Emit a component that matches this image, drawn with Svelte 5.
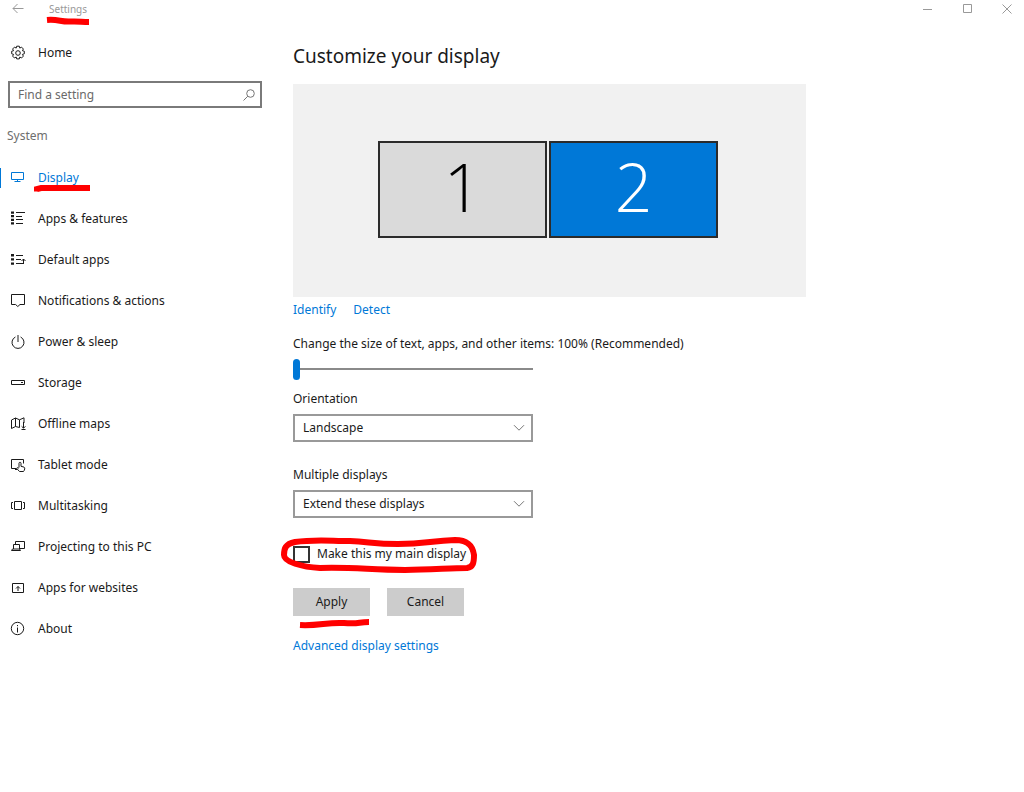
<script lang="ts">
  type NavItem = { id: string; label: string };

  const items: NavItem[] = [
    { id: 'display', label: 'Display' },
    { id: 'apps', label: 'Apps & features' },
    { id: 'default', label: 'Default apps' },
    { id: 'notifications', label: 'Notifications & actions' },
    { id: 'power', label: 'Power & sleep' },
    { id: 'storage', label: 'Storage' },
    { id: 'maps', label: 'Offline maps' },
    { id: 'tablet', label: 'Tablet mode' },
    { id: 'multitasking', label: 'Multitasking' },
    { id: 'projecting', label: 'Projecting to this PC' },
    { id: 'websites', label: 'Apps for websites' },
    { id: 'about', label: 'About' },
  ];

  let active = $state('display');
  let selected = $state(2);
  let scale = $state(100);
  let orientation = $state('Landscape');
  let multiple = $state('Extend these displays');
  let isMain = $state(false);
  let query = $state('');
</script>

{#snippet chevron()}
  <svg class="chevron" viewBox="0 0 12 8" aria-hidden="true"><path d="M1 1.2 6 6.2 11 1.2" /></svg>
{/snippet}

{#snippet icon(id: string)}
  <svg class="icon" viewBox="0 0 16 16" aria-hidden="true">
    {#if id === 'display'}
      <path d="M1.500 2.500h12v7h-12zM7.500 9.500v2M4.500 11.500h6" />
    {:else if id === 'apps'}
      <path d="M6 1.500h9M6 5.500h6M6 8.500h7M6 12.500h7" />
      <path class="dots" d="M2.500 .5v13" stroke-dasharray="2.200 1.400" />
    {:else if id === 'default'}
      <path d="M6 3.500h7M6 7.500h5M6 11.500h7M13.500 12V7M11.500 9l2-2 2 2" />
      <path class="dots" d="M2.500 2v11" stroke-dasharray="2.400 1.800" />
    {:else if id === 'notifications'}
      <path d="M1.500 1.500h13v10H10L7.800 13.500 5.600 11.500H1.500z" />
    {:else if id === 'power'}
      <path d="M8 1v7M5.400 3A6 6 0 1 0 10.600 3" />
    {:else if id === 'storage'}
      <path d="M1.500 5.500h13v4h-13zM11 7.500h2" />
    {:else if id === 'maps'}
      <path d="M9.500 11.500 5.500 10.500 1.500 12.500V4L5.500 2l4 1.800 4.500-2V7M5.500 2v8.500M9.500 3.800v7.700M13.500 6v6M11.600 10.300l1.900 1.900 1.900-1.900M11.500 13.500h4" />
    {:else if id === 'tablet'}
      <path d="M6.500 11.500h-5v-9h12v4M5 12.500h2" />
      <path d="M9 10.500V6.300c0-1.400 2-1.400 2 0v3l3 .8c1.300.4.8 3-.5 4.400h-4L7 11.800c-.6-1.200.8-1.800 2-.3" />
    {:else if id === 'multitasking'}
      <path d="M4.500 3.500h7v8h-7zM3 4.500H1.500v6H3M13 4.500h1.500v6H13" />
    {:else if id === 'projecting'}
      <path d="M5.500 6V2.500h9v7H10M3.500 10V5.500h6V10M1.500 11.500h9l-1-1.500h-7z" />
    {:else if id === 'websites'}
      <path d="M2.500 3.500h11v9h-11zM8 11V6.500M6 8.500l2-2 2 2" />
    {:else if id === 'about'}
      <circle cx="7.500" cy="7.500" r="6.200" /><path d="M7.500 6.500v5M7.500 4v1.200" />
    {/if}
  </svg>
{/snippet}

<div class="window">
  <header class="titlebar">
    <button class="back" aria-label="Back">
      <svg viewBox="0 0 12 12"><path d="M11.500 5.500H1M5.500 1 1 5.500 5.500 10" /></svg>
    </button>
    <span class="title">
      Settings
      <svg class="mark under-title" viewBox="0 0 44 10" aria-hidden="true">
        <path d="M1 4C12 3 15 6 24 5.500S35 6 43 6" />
      </svg>
    </span>
    <div class="controls">
      <button aria-label="Minimize"><svg viewBox="0 0 10 10"><path d="M1 5.500h9" /></svg></button>
      <button aria-label="Maximize"><svg viewBox="0 0 10 10"><path d="M1.500.500h8v8h-8z" /></svg></button>
      <button aria-label="Close"><svg viewBox="0 0 10 10"><path d="m.500.500 9 9M9.500.500l-9 9" /></svg></button>
    </div>
  </header>

  <div class="body">
    <aside>
      <a class="home" href="#home">
        <svg class="icon" viewBox="0 0 16 16" aria-hidden="true">
          <circle cx="8" cy="8" r="2.300" />
          <path d="M6.700 1.200h2.600l.5 1.900 1.700-1 1.900 1.900-1 1.700 1.900.5v2.600l-1.900.6 1 1.700-1.900 1.900-1.700-1-.5 1.900H6.700L6.200 12l-1.700 1-1.900-1.900 1-1.700-1.900-.6V6.200l1.900-.5-1-1.700 1.900-1.900 1.700 1z" />
        </svg>
        Home
      </a>

      <div class="search">
        <input type="text" placeholder="Find a setting" aria-label="Find a setting" bind:value={query} />
        <svg viewBox="0 0 12 12" aria-hidden="true"><circle cx="7.500" cy="4.500" r="3.800" /><path d="M4.800 7.200.5 11.500" /></svg>
      </div>

      <h2>System</h2>

      <nav>
        {#each items as item (item.id)}
          <a
            href="#{item.id}"
            class:active={active === item.id}
            onclick={() => (active = item.id)}
          >
            {@render icon(item.id)}
            <span>{item.label}</span>
            {#if item.id === 'display'}
              <svg class="mark under-nav" viewBox="0 0 58 10" aria-hidden="true">
                <path d="M4 8.500V6L8 5H57" />
              </svg>
            {/if}
          </a>
        {/each}
      </nav>
    </aside>

    <main>
      <h1>Customize your display</h1>

      <div class="preview">
        {#each [1, 2] as n}
          <button class="monitor" class:selected={selected === n} onclick={() => (selected = n)}>{n}</button>
        {/each}
      </div>

      <div class="links">
        <a href="#identify">Identify</a>
        <a href="#detect">Detect</a>
      </div>

      <label class="size-label" for="scale">
        Change the size of text, apps, and other items: {scale}% (Recommended)
      </label>
      <input id="scale" class="slider" type="range" min="100" max="175" step="25" bind:value={scale} />

      <label class="orientation-label" for="orientation">Orientation</label>
      <div class="select">
        <select id="orientation" bind:value={orientation}>
          <option>Landscape</option>
          <option>Portrait</option>
        </select>
        {@render chevron()}
      </div>

      <label class="multiple-label" for="multiple">Multiple displays</label>
      <div class="select">
        <select id="multiple" bind:value={multiple}>
          <option>Extend these displays</option>
          <option>Duplicate these displays</option>
        </select>
        {@render chevron()}
      </div>

      <div class="check">
        <label><input type="checkbox" bind:checked={isMain} />Make this my main display</label>
        <svg class="mark around-check" viewBox="0 0 198 38" aria-hidden="true">
          <path d="M15 6C35 3 50 5 70 5 90 6 95 8 118 8 145 8 150 5 175 4 190 4 193 12 194 19 194 27 193 31 187 32 170 32 150 34 125 34 90 34 75 31 40 32 22 31 4 26 4 19 4 13 5 8 15 6Z" />
        </svg>
      </div>

      <div class="actions">
        <div class="apply">
          <button>Apply</button>
          <svg class="mark under-apply" viewBox="0 0 72 12" aria-hidden="true">
            <path d="M1 8C20 9 28 5 45 6S58 5 70 5" />
          </svg>
        </div>
        <button>Cancel</button>
      </div>

      <a class="advanced" href="#advanced">Advanced display settings</a>
    </main>
  </div>
</div>

<style>
  :global(body) {
    background: #fff;
  }

  .window {
    min-height: 100vh;
    color: #1a1a1a;
    font-family: 'Noto Sans', 'Open Sans', sans-serif;
    font-size: 12px;
    line-height: 20px;
  }

  svg {
    display: block;
    fill: none;
    stroke: currentColor;
  }

  button,
  input,
  select {
    margin: 0;
    font: inherit;
    color: inherit;
    border-radius: 0;
  }

  a {
    color: #0078d7;
    text-decoration: none;
  }

  h1,
  h2 {
    margin: 0;
    font-weight: 400;
  }

  .titlebar {
    display: flex;
    align-items: center;
    height: 18px;
    padding: 0 12px;
    color: #999;
    font-size: 10px;
  }

  .titlebar button {
    padding: 0;
    background: none;
    border: 0;
  }

  .back svg {
    width: 12px;
    height: 12px;
  }

  .title {
    position: relative;
    margin-left: 25px;
  }

  .controls {
    display: flex;
    gap: 30px;
    margin-left: auto;
  }

  .controls svg {
    width: 10px;
    height: 10px;
  }

  .body {
    display: grid;
    grid-template-columns: 262px minmax(0, 1fr);
    column-gap: 31px;
  }

  aside {
    padding-top: 25px;
  }

  .icon {
    width: 16px;
    height: 16px;
    flex: none;
  }

  .dots {
    stroke-width: 3;
  }

  .home {
    display: flex;
    align-items: center;
    gap: 12px;
    padding-left: 10px;
    color: inherit;
  }

  .search {
    display: flex;
    align-items: center;
    height: 23px;
    margin: 18px 0 0 8px;
    padding-right: 5px;
    border: 2px solid #7a7a7a;
    color: #767676;
  }

  .search input {
    flex: 1;
    min-width: 0;
    padding: 0 8px;
    border: 0;
    outline: 0;
    background: none;
  }

  .search input::placeholder {
    color: #6a6a6a;
    opacity: 1;
  }

  .search svg {
    width: 12px;
    height: 12px;
  }

  h2 {
    margin: 18px 0 11px 7px;
    font-size: 12px;
    color: #6e6e6e;
  }

  nav a {
    position: relative;
    display: flex;
    align-items: center;
    gap: 12px;
    height: 41px;
    padding-left: 10px;
    color: inherit;
  }

  nav a.active {
    color: #0078d7;
  }

  nav a.active::before {
    content: '';
    position: absolute;
    left: 0;
    width: 1px;
    height: 20px;
    background: #0078d7;
  }

  main {
    display: flex;
    flex-direction: column;
    align-items: flex-start;
    padding: 24px 20px 24px 0;
  }

  h1 {
    font-size: 19px;
    line-height: 28px;
  }

  .preview {
    box-sizing: border-box;
    display: flex;
    justify-content: center;
    gap: 2px;
    width: 100%;
    max-width: 513px;
    margin-top: 14px;
    padding: 57px 3px 59px 0;
    background: #f1f1f1;
  }

  .monitor {
    width: 169px;
    height: 97px;
    padding: 0 0 8px;
    border: 2px solid #2b2b2b;
    background: #dadada;
    color: #000;
    font-family: 'Open Sans', 'Noto Sans', sans-serif;
    font-size: 66px;
    font-weight: 300;
    line-height: 80px;
  }

  .monitor.selected {
    background: #0078d7;
    color: #fff;
  }

  .links {
    display: flex;
    gap: 17px;
    margin-top: 3px;
  }

  .size-label {
    margin-top: 14px;
  }

  .slider {
    appearance: none;
    width: 240px;
    height: 22px;
    margin-top: 4px;
    background: linear-gradient(#8a8a8a, #8a8a8a) center / 100% 2px no-repeat;
  }

  .slider::-webkit-slider-thumb {
    appearance: none;
    width: 7px;
    height: 21px;
    border-radius: 4px;
    background: #0078d7;
  }

  .orientation-label {
    margin: 9px 0 5px;
  }

  .multiple-label {
    margin: 23px 0 5px;
  }

  .select {
    position: relative;
    width: 240px;
  }

  select {
    appearance: none;
    display: block;
    width: 100%;
    height: 28px;
    padding: 0 30px 0 8px;
    border: 2px solid #999;
    background: #fff;
  }

  .chevron {
    position: absolute;
    top: 10px;
    right: 8px;
    width: 12px;
    height: 8px;
    color: #777;
    pointer-events: none;
  }

  .check {
    position: relative;
    margin-top: 26px;
  }

  .check label {
    display: flex;
    align-items: center;
    gap: 7px;
  }

  .check input {
    appearance: none;
    box-sizing: border-box;
    width: 17px;
    height: 17px;
    border: 2px solid #333;
    background: #fff;
  }

  .check input:checked {
    background: #0078d7;
  }

  .actions {
    display: flex;
    gap: 17px;
    margin-top: 24px;
  }

  .actions button {
    display: block;
    width: 77px;
    height: 28px;
    padding: 0;
    border: 0;
    background: #ccc;
  }

  .apply {
    position: relative;
  }

  .advanced {
    margin-top: 20px;
  }

  .mark {
    position: absolute;
    stroke: #f00;
    stroke-width: 6;
    pointer-events: none;
  }

  .under-title {
    top: 17px;
    left: -3px;
    width: 44px;
    height: 10px;
  }

  .under-nav {
    top: 26px;
    left: 33px;
    width: 58px;
    height: 10px;
  }

  .around-check {
    top: -8px;
    left: -13px;
    width: 198px;
    height: 38px;
  }

  .under-apply {
    top: 29px;
    left: 6px;
    width: 72px;
    height: 12px;
  }
</style>
